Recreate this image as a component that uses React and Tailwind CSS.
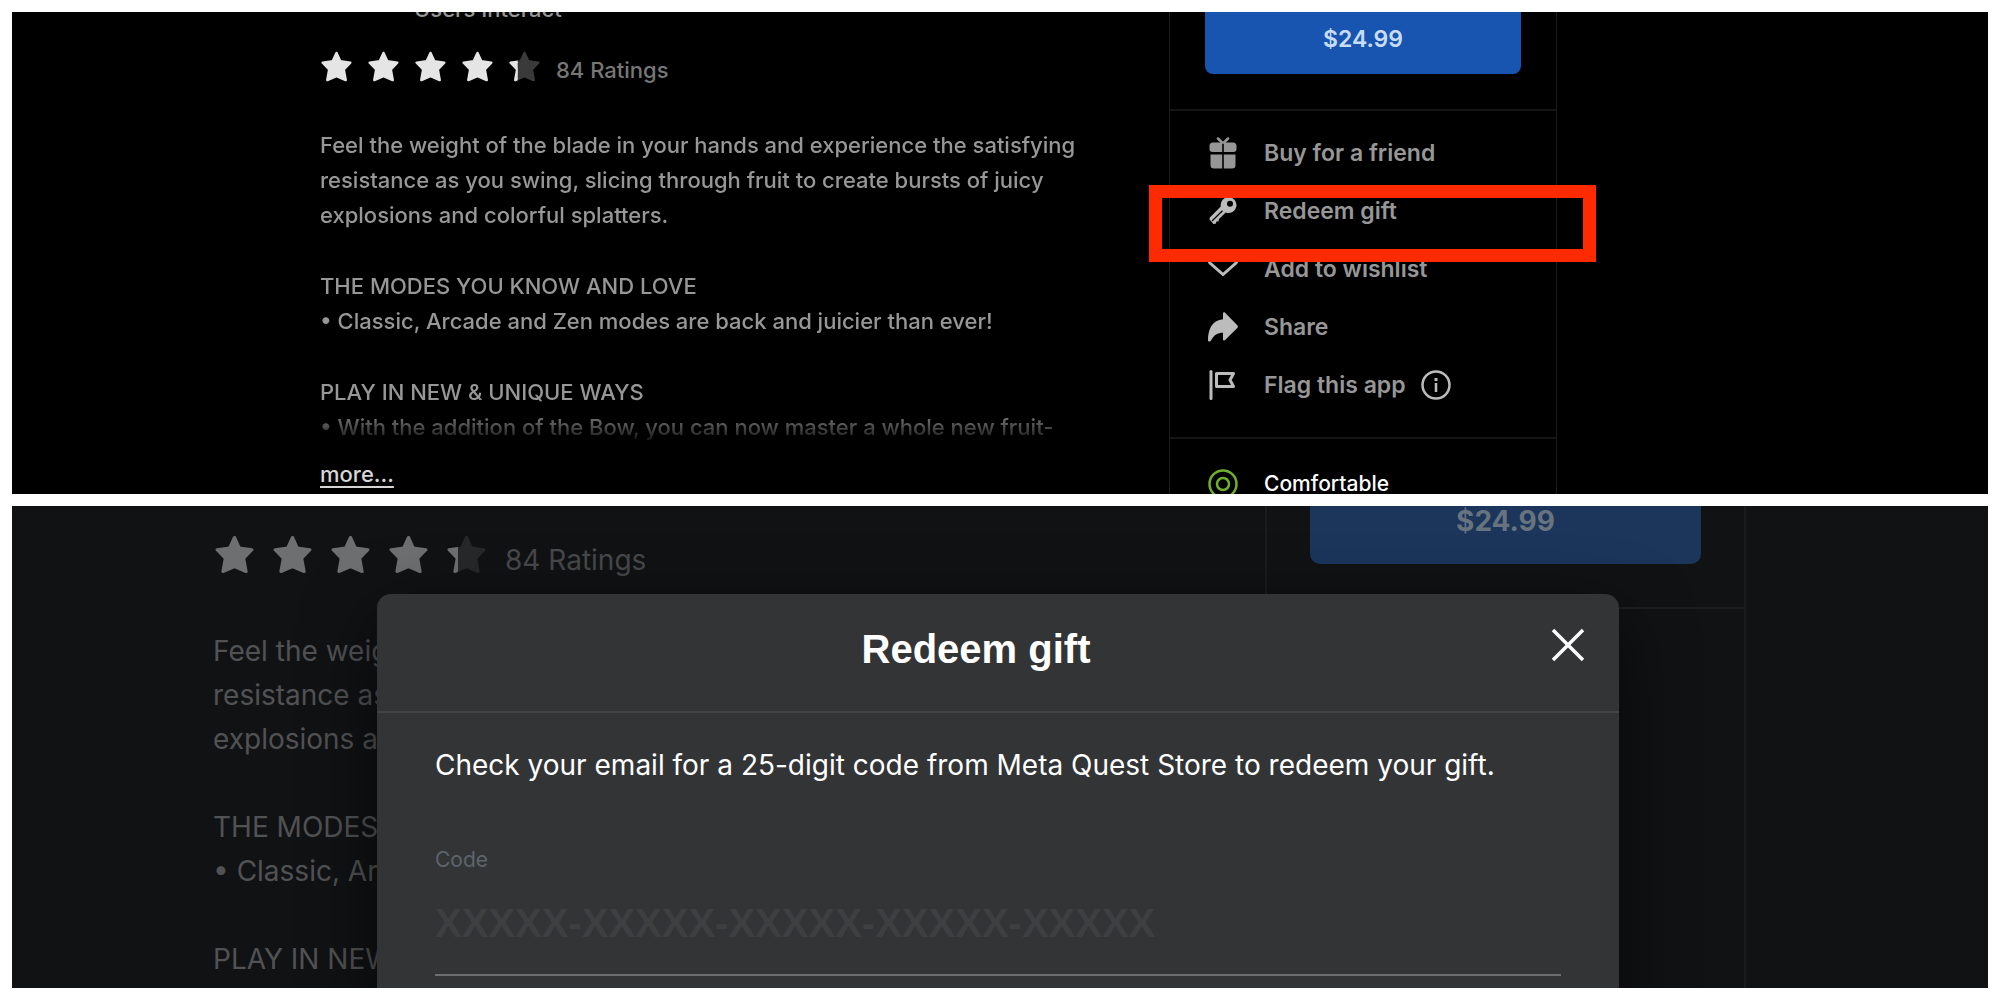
const STAR = "M15.500 2 19.300 10.300 29.300 11.700 22.800 18.500 24.700 29 15.500 25 6.300 29 8.200 18.500 1.700 11.700 11.700 10.300z";

function Star({ color, rest, part = 1, className }) {
  return (
    <svg viewBox="0 0 31 31" className={className} strokeWidth="2.500" strokeLinejoin="round" aria-hidden="true">
      {part < 1 && <path d={STAR} fill={rest} stroke={rest} />}
      <svg width={31 * part} height="31">
        <path d={STAR} fill={color} stroke={color} />
      </svg>
    </svg>
  );
}

function Stars({ color, rest, size }) {
  return [1, 1, 1, 1, 0.28].map((part, i) => (
    <Star key={i} color={color} rest={rest} part={part} className={size} />
  ));
}

function GiftIcon() {
  return (
    <svg viewBox="0 0 30 32" className="h-8 w-[30px]" fill="#979797" aria-hidden="true">
      <path d="M10 1.500 14 5.500h2l4-4" fill="none" stroke="#979797" strokeWidth="2.500" strokeLinecap="round" strokeLinejoin="round" />
      <path d="M5 5.500h9.200V15H4.500A3 3 0 0 1 1.500 12V9A3.500 3.500 0 0 1 5 5.500zM15.800 5.500H25A3.500 3.500 0 0 1 28.500 9v3a3 3 0 0 1-3 3h-9.700zM2.500 17.500h11.700V31.500H6A3.500 3.500 0 0 1 2.500 28zM15.800 17.500h11.700V28a3.500 3.500 0 0 1-3.500 3.500h-8.200z" />
    </svg>
  );
}

function KeyIcon() {
  return (
    <svg viewBox="0 0 30 30" className="size-[30px]" fill="none" aria-hidden="true">
      <path fillRule="evenodd" fill="#bcbcbc" d="M20.500 1a8 8 0 1 1-2.800 15.500L11 23l-.5 2.200-2 .3-.8 2.200L5.500 28 1.500 23.500 1.800 21.500 12.800 10.500A8 8 0 0 1 20.500 1zM22 4.800a3 3 0 1 0 0 6 3 3 0 0 0 0-6z" />
      <path d="M4 25 14.500 14.800" stroke="#000" strokeWidth="1.200" />
    </svg>
  );
}

function HeartIcon() {
  return (
    <svg viewBox="0 0 30 30" className="size-[30px] overflow-visible" fill="none" stroke="#bcbcbc" strokeWidth="3" aria-hidden="true">
      <path d="M15 20.500 2 9C-1.500 4.500 1-2.500 7.500-2.500c3.500 0 6 1.500 7.500 4 1.500-2.500 4-4 7.500-4 6.500 0 9 7 5.500 11.500z" />
    </svg>
  );
}

function ShareIcon() {
  return (
    <svg viewBox="0 0 30 30" className="size-[30px]" fill="#bcbcbc" aria-hidden="true">
      <path d="M15 1.500c0-1.200 1.300-1.600 2.100-.8l12.200 12.600c.8.8.8 1.800 0 2.600L17.100 28c-.8.800-2.100.4-2.100-.8v-6.400c-5.500 0-9 2-12 7.800-.8 1.500-3 1.200-3-.4C0 16.500 4.500 8.200 15 7.200z" />
    </svg>
  );
}

function FlagIcon() {
  return (
    <svg viewBox="0 0 30 30" className="size-[30px]" fill="none" stroke="#bcbcbc" strokeWidth="3" aria-hidden="true">
      <path d="M3 1.500v27" strokeLinecap="round" />
      <path d="M8.500 3.500H25.500l-3.500 6.500 3.500 6.500H8.500z" strokeLinejoin="round" />
    </svg>
  );
}

function InfoIcon() {
  return (
    <svg viewBox="0 0 30 30" className="size-[30px]" fill="none" stroke="#bcbcbc" aria-hidden="true">
      <circle cx="15" cy="15" r="13.500" strokeWidth="2.500" />
      <path d="M15 13v9" strokeWidth="2.500" />
      <path d="M15 8v3" strokeWidth="3" />
    </svg>
  );
}

function Action({ icon, label, children }) {
  return (
    <li className="relative flex h-[58px] items-center">
      <button type="button" className="flex items-center gap-[26px]">
        {icon}
        <span className="text-[23px] font-semibold text-[#979797]">{label}</span>
      </button>
      {children}
    </li>
  );
}

function StorePage() {
  return (
    <section className="min-h-0 flex-1 overflow-hidden bg-black">
      <div className="grid grid-cols-[308fr_849fr_388fr_431fr]">
        <div className="col-start-2 text-[22px] font-medium text-[#979797]">
          <p className="-mt-5 pl-[94px] leading-[34px]">Users Interact</p>
          <div className="mt-[22px] flex h-9 items-center gap-4 pl-px">
            <Stars color="#e5e5e5" rest="#3a3a3a" size="size-[31px]" />
            <span className="pt-2 text-[#777777]">84 Ratings</span>
          </div>
          <div className="mt-11 h-[322px] overflow-hidden leading-[35px] whitespace-nowrap [mask-image:linear-gradient(black_280px,transparent_318px)]">
            <p>
              Feel the weight of the blade in your hands and experience the satisfying
              <br />
              resistance as you swing, slicing through fruit to create bursts of juicy
              <br />
              explosions and colorful splatters.
            </p>
            <p className="mt-9">
              THE MODES YOU KNOW AND LOVE
              <br />• Classic, Arcade and Zen modes are back and juicier than ever!
            </p>
            <p className="mt-9">
              PLAY IN NEW &amp; UNIQUE WAYS
              <br />• With the addition of the Bow, you can now master a whole new fruit-
            </p>
          </div>
          <a href="#more" className="mt-2 inline-block leading-8 text-[#d6d6d6] underline decoration-2 underline-offset-4">
            more...
          </a>
        </div>
        <aside className="border-x border-[#1c1c1c]">
          <div className="border-b-2 border-[#151515] px-[35px] pb-[35px]">
            <button type="button" className="-mt-4 h-[78px] w-full rounded-lg bg-[#1755b1] pt-2 text-[23px] font-semibold text-[#c8dcf7]">
              $24.99
            </button>
          </div>
          <ul className="border-b-2 border-[#151515] pt-[13px] pb-[23px] pl-[38px]">
            <Action icon={<GiftIcon />} label="Buy for a friend" />
            <Action icon={<KeyIcon />} label="Redeem gift">
              <span className="absolute top-[3px] -right-10 -left-[59px] z-10 h-[77px] border-[13px] border-[#ff2a00]" />
            </Action>
            <Action icon={<HeartIcon />} label="Add to wishlist" />
            <Action icon={<ShareIcon />} label="Share" />
            <Action icon={<FlagIcon />} label="Flag this app">
              <button type="button" aria-label="About flagging" className="ml-[15px]">
                <InfoIcon />
              </button>
            </Action>
          </ul>
          <div className="flex items-center gap-[26px] pt-[29px] pl-[38px]">
            <svg viewBox="0 0 30 30" className="size-[30px]" fill="none" stroke="#6fae2f" strokeWidth="2.500" aria-hidden="true">
              <circle cx="15" cy="15" r="13.500" />
              <circle cx="15" cy="15" r="6" />
            </svg>
            <span className="text-[21px] leading-8 font-medium text-white">Comfortable</span>
          </div>
        </aside>
      </div>
    </section>
  );
}

function RedeemDialog() {
  return (
    <div className="absolute inset-0 grid grid-cols-[365fr_1242fr_369fr] pt-[88px]">
      <div role="dialog" aria-labelledby="redeem-title" className="col-start-2 h-[500px] rounded-t-[14px] bg-[#333436] shadow-[0_24px_70px_rgba(0,0,0,0.6)]">
        <header className="flex h-[119px] items-center border-b-2 border-[#444547] pr-8 pl-[26px]">
          <h2 id="redeem-title" className="flex-1 pb-2 text-center font-['Liberation_Sans',sans-serif] text-[40px] font-bold text-white">
            Redeem gift
          </h2>
          <button type="button" aria-label="Close" className="mb-4">
            <svg viewBox="0 0 38 38" className="size-[38px]" stroke="#fff" strokeWidth="3.500" aria-hidden="true">
              <path d="M4 4 34 34M34 4 4 34" />
            </svg>
          </button>
        </header>
        <form className="px-[58px] pt-8">
          <p className="text-[28px] leading-10 whitespace-nowrap text-white">
            Check your email for a 25-digit code from Meta Quest Store to redeem your gift.
          </p>
          <label htmlFor="code" className="mt-[59px] block text-[21px] leading-8 text-[#5c646d]">
            Code
          </label>
          <input
            id="code"
            type="text"
            placeholder="XXXXX-XXXXX-XXXXX-XXXXX-XXXXX"
            className="mt-3 h-[88px] w-full border-b-2 border-[#6d6e70] bg-transparent pb-4 font-['Liberation_Sans',sans-serif] text-[40px] font-bold text-white placeholder:text-[#3e3f41] focus:outline-none"
          />
        </form>
      </div>
    </div>
  );
}

function RedeemPage() {
  return (
    <section className="relative min-h-0 flex-1 overflow-hidden bg-[#111214]">
      <div className="grid grid-cols-[201fr_1052fr_481fr_242fr]">
        <div className="col-start-2 text-[28px] text-[#515254]">
          <div className="mt-[26px] flex h-11 items-center gap-[19px] pl-0.5">
            <Stars color="#6e6f71" rest="#27282a" size="size-[39px]" />
            <span className="pt-3 text-[#47484a]">84 Ratings</span>
          </div>
          <div className="mt-[53px] leading-[44px] whitespace-nowrap">
            <p>
              Feel the weight
              <br />
              resistance as
              <br />
              explosions and
            </p>
            <p className="mt-11">
              THE MODES
              <br />• Classic, Arcade
            </p>
            <p className="mt-11">PLAY IN NEW</p>
          </div>
        </div>
        <aside className="h-[500px] border-x-2 border-[#1a1b1d]">
          <div className="border-b-2 border-[#1d1e20] px-[43px] pb-[43px]">
            <button type="button" className="-mt-8 h-[90px] w-full rounded-[10px] bg-[#1b355b] pt-1 text-[28px] font-bold text-[#67737f]">
              $24.99
            </button>
          </div>
        </aside>
      </div>
      <RedeemDialog />
    </section>
  );
}

export default function App() {
  return (
    <main className="flex h-screen flex-col gap-3 bg-white p-3 font-[Inter,sans-serif]">
      <StorePage />
      <RedeemPage />
    </main>
  );
}
